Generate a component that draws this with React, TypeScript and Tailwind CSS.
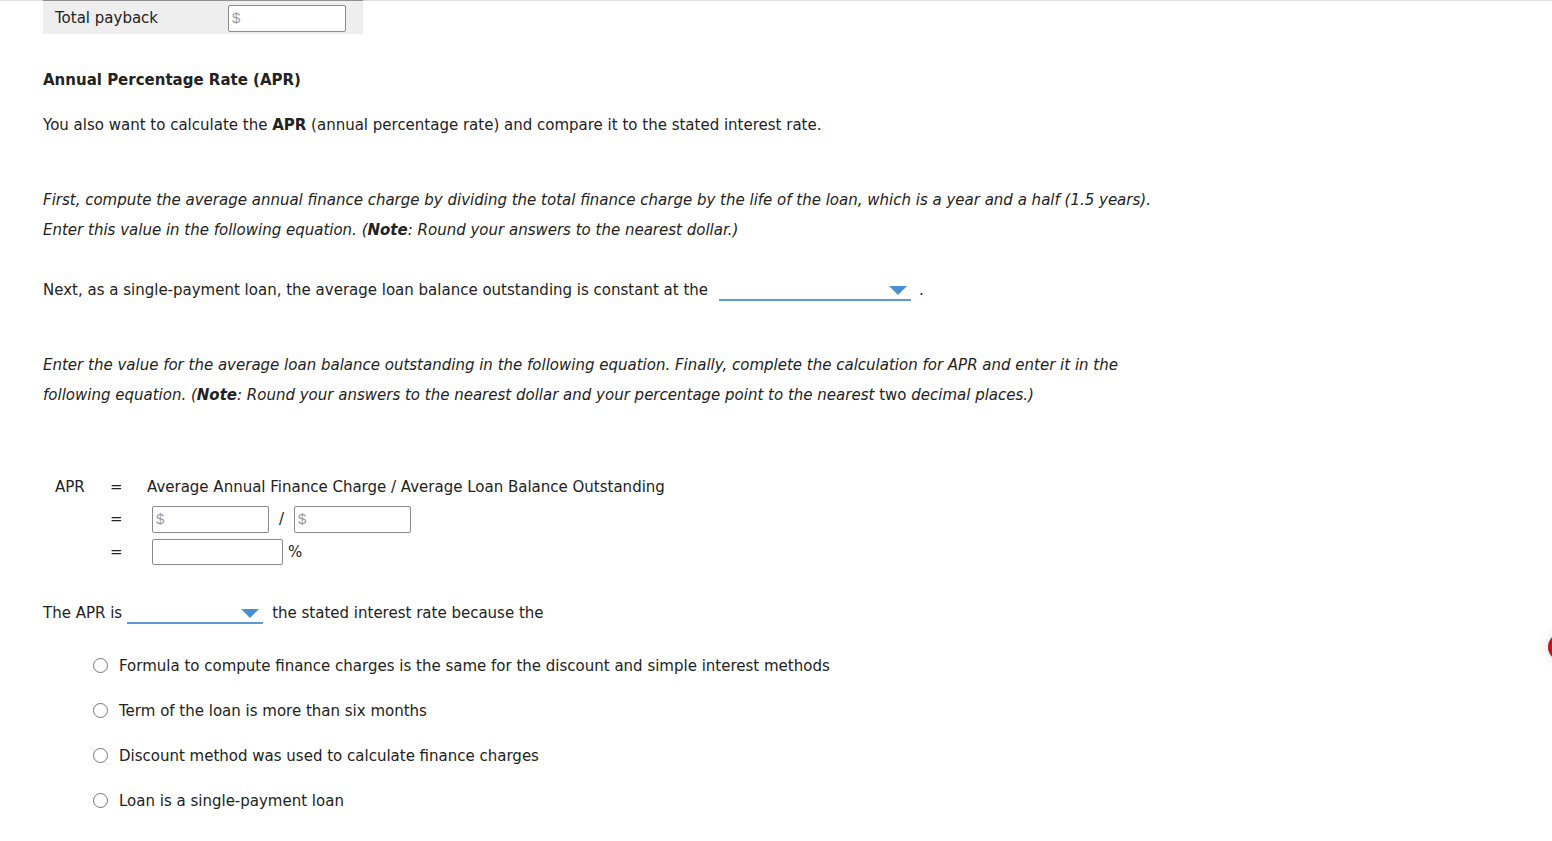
import React from "react";

const font = { fontFamily: '"DejaVu Sans", Verdana, sans-serif' };

function DollarInput({ w }: { w: string }) {
  return (
    <div className={`${w} h-[27px] border border-[#8a8a8a] rounded-[2px] bg-white flex items-center pl-[3px]`}>
      <span className="text-[15px] text-[#9a9a9a] font-['Liberation_Sans',sans-serif]">$</span>
    </div>
  );
}

function Dropdown({ w }: { w: string }) {
  return (
    <div className={`${w} h-[20px] mb-[2px] border-b-2 border-[#5b9bd1] relative flex justify-end items-start pr-[4px] pt-[5px]`}>
      <svg width="18" height="9" viewBox="0 0 18 9">
        <polygon points="0,0 18,0 9,9" fill="#4a90d0" />
      </svg>
    </div>
  );
}

function Radio({ label }: { label: string }) {
  return (
    <div className="flex items-center h-[45px]">
      <span className="w-[15px] h-[15px] -mt-[2px] rounded-full border border-[#767676] bg-white mr-[11px] ml-[93px]" />
      <span>{label}</span>
    </div>
  );
}

export default function App() {
  return (
    <div className="min-h-screen bg-white text-[#222] text-[15px] relative overflow-hidden" style={font}>
      <div className="h-[1px] bg-[#dcdcdc] w-full" />
      <div className="ml-[43px] w-[320px] h-[34px] bg-[#eeeeee] border-t border-[#8f8f8f] -mt-[1px] flex items-center pt-[1px]">
        <span className="ml-[12px] w-[173px] pt-[1px]">Total payback</span>
        <DollarInput w="w-[118px]" />
      </div>

      <div className="ml-[43px]">
        <h2 className="font-bold mt-[35px] h-[22px] leading-[22px]">Annual Percentage Rate (APR)</h2>
        <p className="mt-[23px] leading-[22px]">
          You also want to calculate the <b>APR</b> (annual percentage rate) and compare it to the stated interest rate.
        </p>
        <p className="italic mt-[49px] leading-[30px]">
          First, compute the average annual finance charge by dividing the total finance charge by the life of the loan, which is a year and a half (1.5 years).
          <br />
          Enter this value in the following equation. (<b>Note</b>: Round your answers to the nearest dollar.)
        </p>
        <div className="flex items-end mt-[34px] h-[24px]">
          <span className="leading-[22px] pb-[2px]">Next, as a single-payment loan, the average loan balance outstanding is constant at the</span>
          <div className="ml-[11px]">
            <Dropdown w="w-[192px]" />
          </div>
          <span className="ml-[8px] pb-[2px] leading-[22px]">.</span>
        </div>
        <p className="italic mt-[47px] leading-[30px]">
          Enter the value for the average loan balance outstanding in the following equation. Finally, complete the calculation for APR and enter it in the
          <br />
          following equation. (<b>Note</b>: Round your answers to the nearest dollar and your percentage point to the nearest <span className="not-italic">two</span> decimal places.)
        </p>

        <div className="mt-[61px] ml-[12px]">
          <div className="flex items-center h-[32px]">
            <span className="w-[55px]">APR</span>
            <span className="w-[37px]">=</span>
            <span>Average Annual Finance Charge / Average Loan Balance Outstanding</span>
          </div>
          <div className="flex items-center h-[33px]">
            <span className="w-[55px]" />
            <span className="w-[42px]">=</span>
            <DollarInput w="w-[117px]" />
            <span className="mx-[10px]">/</span>
            <DollarInput w="w-[117px]" />
          </div>
          <div className="flex items-center h-[32px]">
            <span className="w-[55px]" />
            <span className="w-[42px]">=</span>
            <div className="w-[131px] h-[26px] border border-[#8a8a8a] rounded-[2px] bg-white" />
            <span className="ml-[5px]">%</span>
          </div>
        </div>

        <div className="flex items-end mt-[34px] h-[24px]">
          <span className="leading-[22px] pb-[2px]">The APR is</span>
          <div className="ml-[5px]">
            <Dropdown w="w-[136px]" />
          </div>
          <span className="ml-[9px] pb-[2px] leading-[22px]">the stated interest rate because the</span>
        </div>
      </div>

      <div className="mt-[18px]">
        <Radio label="Formula to compute finance charges is the same for the discount and simple interest methods" />
        <Radio label="Term of the loan is more than six months" />
        <Radio label="Discount method was used to calculate finance charges" />
        <Radio label="Loan is a single-payment loan" />
      </div>

      <div className="absolute left-[1548px] top-[633px] w-[28px] h-[28px] rounded-full bg-[#c0141c] shadow-[0_0_12px_rgba(0,0,0,0.15)]" />
    </div>
  );
}
